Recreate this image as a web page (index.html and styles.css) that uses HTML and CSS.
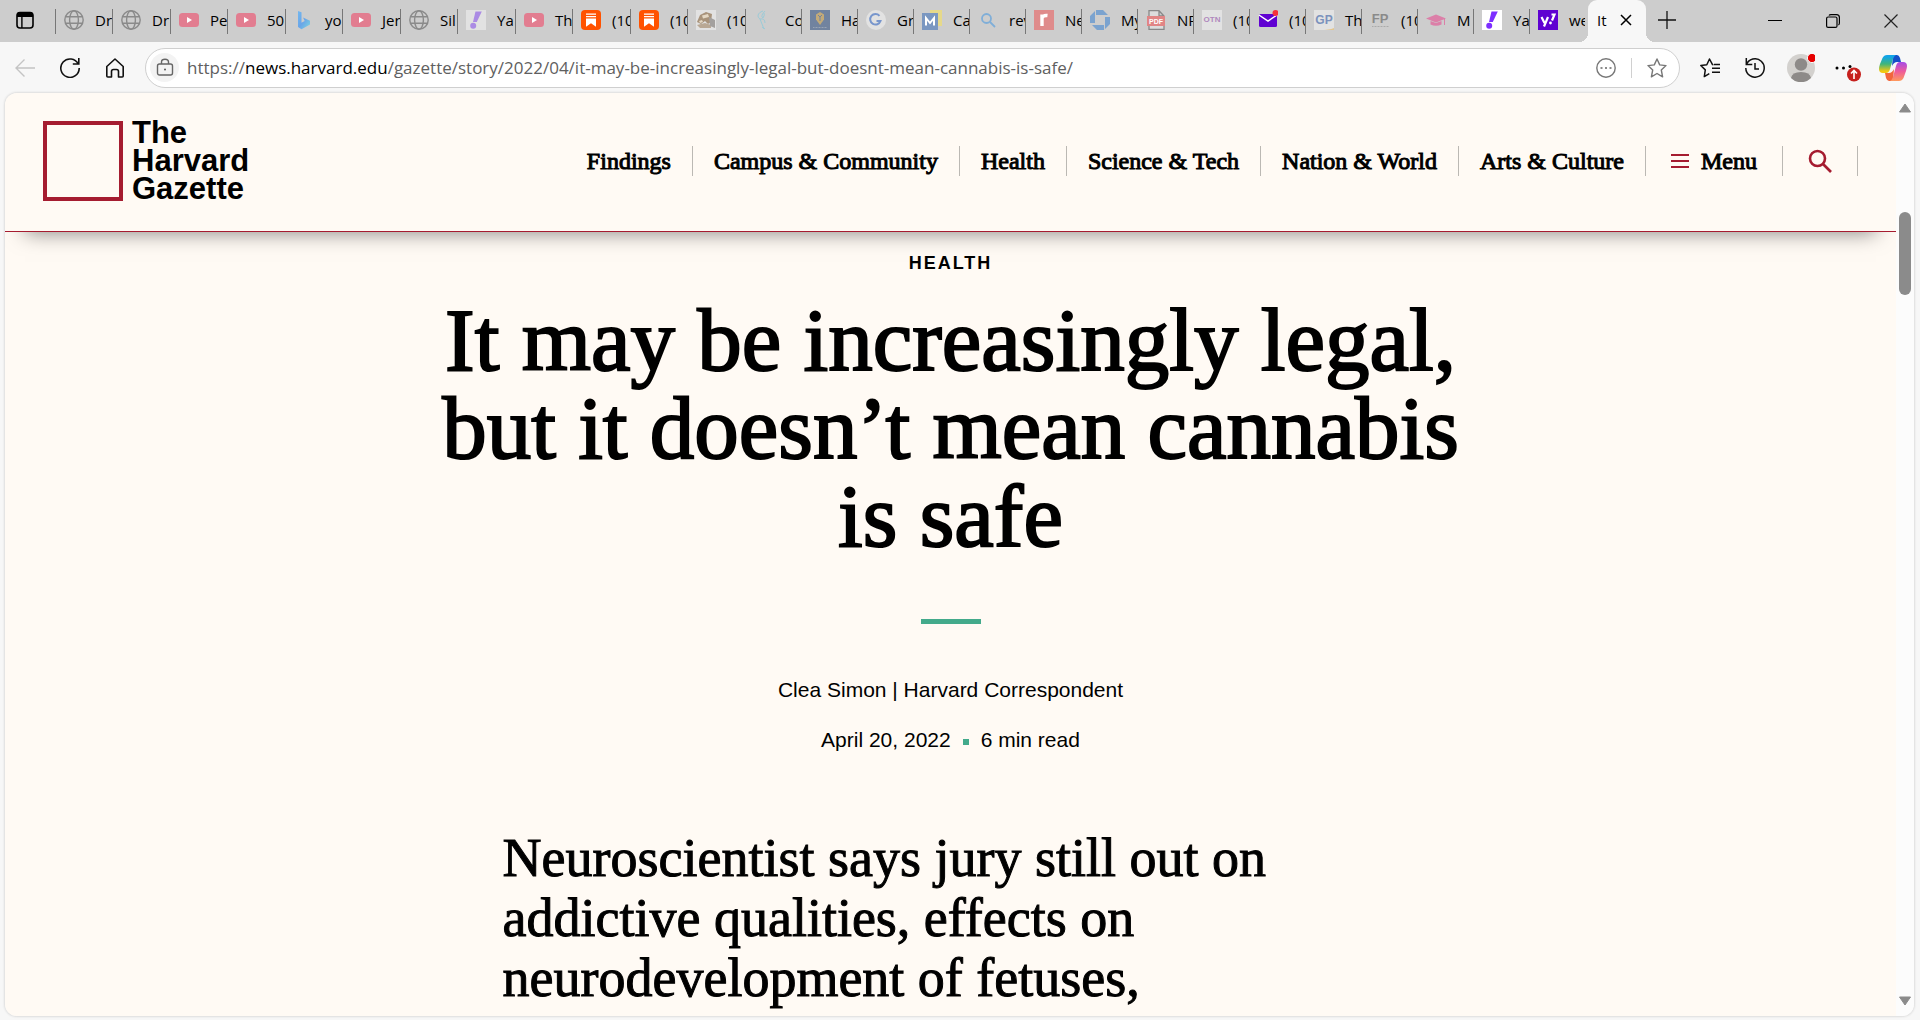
FILE: index.html
```html
<!DOCTYPE html>
<html lang="en">
<head>
    <meta charset="UTF-8">
    <meta name="viewport" content="width=device-width, initial-scale=1.0">
    <title>It may be increasingly legal, but it doesn’t mean cannabis is safe</title>
    <link rel="stylesheet" href="styles.css">
</head>
<body>
    <!-- shared icons -->
    <svg class="sprite" aria-hidden="true">
        <symbol id="globe" viewBox="0 0 20 20">
            <g fill="none" stroke="#8a8a8a" stroke-width="1.4"><circle cx="10" cy="10" r="9.2"/><ellipse cx="10" cy="10" rx="4.4" ry="9.2"/><path d="M1.5 6.8h17M1.5 13.2h17"/></g>
        </symbol>
        <symbol id="youtube" viewBox="0 0 20 20">
            <rect y="3" width="20" height="14" rx="3.5" fill="#e27d90"/><path d="M8 7l5 3-5 3z" fill="#fff"/>
        </symbol>
        <symbol id="substack" viewBox="0 0 20 20">
            <rect width="20" height="20" rx="4" fill="#ff5200"/><path d="M5 4.2h10M5 6.6h10" stroke="#fff" stroke-width="1.2"/><path d="M5 8.5h10v8.2l-5-3.4-5 3.4z" fill="#fff"/>
        </symbol>
        <symbol id="bang" viewBox="0 0 20 20">
            <path d="M9.5 1.5h6.3l-5 10.5H7z"/><circle cx="7.2" cy="15.8" r="3"/>
        </symbol>
    </svg>

    <div class="browser">
        <div class="tabbar">
            <button class="tab-actions" aria-label="Tab actions">
                <svg width="20" height="20" viewBox="0 0 20 20"><rect x="2" y="2.5" width="16" height="15.5" rx="3" fill="none" stroke="#000" stroke-width="1.6"/><path d="M2 7V5a3 3 0 0 1 3-3h10a3 3 0 0 1 3 3v2zM6.2 7h1.4v11H6.2z"/></svg>
            </button>
            <div class="tabs">
                <button class="tab"><svg class="fav"><use href="#globe"/></svg><span>Dr</span></button>
                <button class="tab"><svg class="fav"><use href="#globe"/></svg><span>Dr</span></button>
                <button class="tab"><svg class="fav"><use href="#youtube"/></svg><span>Pe</span></button>
                <button class="tab"><svg class="fav"><use href="#youtube"/></svg><span>50</span></button>
                <button class="tab"><svg class="fav" viewBox="0 0 20 20"><defs><linearGradient id="bing" x1="0" y1="0" x2="1" y2="1"><stop stop-color="#74b8ef"/><stop offset=".5" stop-color="#69a5e8"/><stop offset="1" stop-color="#7fd7df"/></linearGradient></defs><path d="M4 1l3.5 1.3v10.5l3.2-1.7-1.7-3.6 7 3.2v3.8l-8.5 4.8L4 17z" fill="url(#bing)"/></svg><span>yo</span></button>
                <button class="tab"><svg class="fav"><use href="#youtube"/></svg><span>Jer</span></button>
                <button class="tab"><svg class="fav"><use href="#globe"/></svg><span>Sil</span></button>
                <button class="tab"><svg class="fav pale"><use href="#bang" fill="#ab8be4"/></svg><span>Ya</span></button>
                <button class="tab"><svg class="fav"><use href="#youtube"/></svg><span>Th</span></button>
                <button class="tab"><svg class="fav"><use href="#substack"/></svg><span>(10</span></button>
                <button class="tab"><svg class="fav"><use href="#substack"/></svg><span>(10</span></button>
                <button class="tab"><svg class="fav pale" viewBox="0 0 20 20"><path d="M1 12l3-7 6-3 6 2-1 8-3 2-3-3-4 3z" fill="#a8937b"/><path d="M6 5.500l6-1.500 1 3-6 1.500zM3 11l3-1 1 2-3 1z" fill="#e4d8c4"/><path d="M1 15l8-2 6 2v3H4z" fill="#b9a894"/><path d="M13 7l6 3v8l-5-2z" fill="#a3a09e"/></svg><span>(10</span></button>
                <button class="tab"><svg class="fav" viewBox="0 0 20 20" fill="none" stroke="#9bcbd8"><path d="M9 1C3 3 3 7 6 9l4 10M11 1q-5 5-2 7 2-3 1-5M6 9q5-1 5 4M8 17l3 2"/></svg><span>Co</span></button>
                <button class="tab"><svg class="fav" viewBox="0 0 20 20"><path d="M0 0h20v20H0z" fill="#71839f"/><path d="M10 2l4 2.500v5L10 15 6 9.500v-5z" fill="#c3aa78"/><path d="M8 5l2 2 2-2M10 7v4" stroke="#71839f" fill="none"/><path d="M3 17.500h14" stroke="#9aa4b4" stroke-dasharray="1 .5"/></svg><span>Ha</span></button>
                <button class="tab"><svg class="fav" viewBox="0 0 20 20"><circle cx="10" cy="10" r="10" fill="#e2e2e2"/><path d="M13.500 5.800A5.300 5.300 0 1 0 14.500 11h-4" fill="none" stroke="#7896cc" stroke-width="2"/></svg><span>Gr</span></button>
                <button class="tab"><svg class="fav" viewBox="0 0 20 20"><path d="M8 0h12v16H8z" fill="#e6d98a"/><path d="M0 3h16v17H0z" fill="#7a97c1"/><path d="M4 15.500V8l4 5 4-5v7.500" fill="none" stroke="#fff" stroke-width="2"/></svg><span>Ca</span></button>
                <button class="tab"><svg class="fav" viewBox="0 0 20 20" fill="none" stroke="#7faed8" stroke-width="1.800"><circle cx="8.500" cy="8.500" r="4.500"/><path d="M12 12l5 5"/></svg><span>rev</span></button>
                <button class="tab"><svg class="fav" viewBox="0 0 20 20"><path d="M0 0h20v20H0z" fill="#df8b8b"/><path d="M8 16V4.500M8 8q1-3 5.500-2.500" fill="none" stroke="#fff" stroke-width="3.400"/></svg><span>Ne</span></button>
                <button class="tab"><svg class="fav" viewBox="0 0 20 20" fill="#7ba3cf"><path d="M6 0h7l5 5H6zM20 7v7l-5 5V7zM14 20H7l-5-5h12zM0 13V6l5-5v12z"/></svg><span>My</span></button>
                <button class="tab"><svg class="fav" viewBox="0 0 20 20"><path d="M3 .7h10L18 6v13.300H3zM13 1v5h5" fill="#ddd" stroke="#888" stroke-width="1.300"/><rect x="1" y="6" width="18" height="10" fill="#e18585"/><text class="mark-pdf" x="10" y="13.500">PDF</text></svg><span>NP</span></button>
                <button class="tab"><svg class="fav pale" viewBox="0 0 20 20"><text class="mark-otn" x="10" y="12">OTN</text></svg><span>(10</span></button>
                <button class="tab"><svg class="fav" viewBox="0 0 20 20"><rect x="1" y="4" width="18" height="13" rx="1.500" fill="#6001d2"/><path d="M1 5l9 6 9-6" fill="none" stroke="#fff" stroke-width="1.500"/><circle cx="17.500" cy="3" r="3" fill="#f5313b"/></svg><span>(10</span></button>
                <button class="tab"><svg class="fav pale" viewBox="0 0 20 20"><text class="mark-gp" x="10" y="14">GP</text><path d="M6 20q9 0 14-2v2z" fill="#e3c68f"/></svg><span>Th</span></button>
                <button class="tab"><svg class="fav" viewBox="0 0 20 20"><text class="mark-fp" x="10" y="13">FP</text><path d="M2 16.500h17" stroke="#aaa" stroke-dasharray="1 .5"/></svg><span>(10</span></button>
                <button class="tab"><svg class="fav" viewBox="0 0 20 20" fill="#dc7fa8"><path d="M10 4.500l10 4-10 4-10-4z"/><path d="M4.500 11v3.500q5.500 2.500 11 0V11L10 13zM18 9h1v6h-1z"/></svg><span>M</span></button>
                <button class="tab"><svg class="fav white"><use href="#bang" fill="#7d2eff"/></svg><span>Ya</span></button>
                <button class="tab"><svg class="fav" viewBox="0 0 20 20"><path d="M0 0h20v20H0z" fill="#5f01d1"/><path d="M3.500 7l3 6M10 7l-4 9.500M13.500 4.500h3L14 10.500" fill="none" stroke="#fff" stroke-width="2.200"/><circle cx="12.500" cy="13" r="1.400" fill="#fff"/></svg><span>we</span></button>
                <div class="tab-active">
                    <span>It</span>
                    <button aria-label="Close tab"><svg width="12" height="12" viewBox="0 0 12 12"><path d="M1 1l10 10M11 1L1 11" stroke="#000" stroke-width="1.500"/></svg></button>
                </div>
            </div>
            <button class="new-tab" aria-label="New tab"><svg width="18" height="18" viewBox="0 0 18 18"><path d="M9 0v18M0 9h18" stroke="#111" stroke-width="1.300"/></svg></button>
            <div class="window-controls">
                <button aria-label="Minimize"><svg width="14" height="14" viewBox="0 0 14 14"><path d="M0 6.500h14" stroke="#000"/></svg></button>
                <button aria-label="Restore"><svg width="14" height="14" viewBox="0 0 14 14" fill="none" stroke="#000" stroke-width="1.200"><rect x=".6" y="3" width="10.400" height="10.400" rx="1.500"/><path d="M3 1.500Q3.500.6 5 .6h5.500q2.900 0 2.900 2.900V9q0 1.500-1 2"/></svg></button>
                <button aria-label="Close"><svg width="14" height="14" viewBox="0 0 14 14"><path d="M.5.5l13 13M13.500.5l-13 13" stroke="#222" stroke-width="1.200"/></svg></button>
            </div>
        </div>

        <div class="toolbar">
            <div class="nav-buttons">
                <button aria-label="Back"><svg width="20" height="20" viewBox="0 0 20 20" fill="none" stroke="#c4c4c4" stroke-width="1.400"><path d="M20 10H1M9.500 1.500L1 10l8.500 8.500"/></svg></button>
                <button aria-label="Refresh"><svg width="20" height="20" viewBox="0 0 20 20" fill="none" stroke="#111" stroke-width="1.600"><path d="M18.200 6A9.200 9.200 0 1 0 19.200 10M18.800 0v6h-6"/></svg></button>
                <button aria-label="Home"><svg width="20" height="20" viewBox="0 0 20 20" fill="none" stroke="#111" stroke-width="1.600" stroke-linejoin="round"><path d="M10 1l8.200 7.500V18a1 1 0 0 1-1 1h-3.700v-5.500a2 2 0 0 0-2-2h-3a2 2 0 0 0-2 2V19H2.800a1 1 0 0 1-1-1V8.500z"/></svg></button>
            </div>
            <div class="address">
                <button class="site-info" aria-label="View site information"><svg width="18" height="20" viewBox="0 0 18 20" fill="none" stroke="#666" stroke-width="1.400"><rect x="1.500" y="6" width="15" height="11" rx="2"/><path d="M5.500 6V4q0-2.800 3.500-2.800T12.500 4v2"/><circle cx="9" cy="11.500" r="1" fill="#555" stroke="none"/></svg></button>
                <div class="url">https://<b>news.harvard.edu</b>/gazette/story/2022/04/it-may-be-increasingly-legal-but-doesnt-mean-cannabis-is-safe/</div>
                <button class="more-site" aria-label="More"><svg width="20" height="20" viewBox="0 0 20 20"><circle cx="10" cy="10" r="9.200" fill="none" stroke="#777" stroke-width="1.400"/><path d="M4.500 9.200h2v1.600h-2zM9 9.200h2v1.600H9zM13.500 9.200h2v1.600h-2z" fill="#666"/></svg></button>
                <button class="favorite" aria-label="Add to favorites"><svg width="20" height="20" viewBox="0 0 20 20" fill="none" stroke="#777" stroke-width="1.400" stroke-linejoin="round"><path d="M10 1l2.700 5.900 6.300.7-4.700 4.400 1.300 6.800L10 15.500l-5.600 3.300L5.700 12 1 7.600l6.300-.7z"/></svg></button>
            </div>
            <div class="browser-tools">
                <button aria-label="Favorites"><svg width="20" height="20" viewBox="0 0 20 20" fill="none" stroke="#111" stroke-width="1.500" stroke-linejoin="round"><path d="M13.500 6.900l-1-.3L9.500 1 6.800 6.800.8 7.500l4.500 4.400-1 6.700 5-2.900M12 10.200h8M12 14.200h8M14 6.500h6"/></svg></button>
                <button class="history" aria-label="History"><svg width="20" height="20" viewBox="0 0 20 20" fill="none" stroke="#111" stroke-width="1.500"><path d="M1.300 7A9.200 9.200 0 1 1 .8 10M1.300 0v6.500h6M10 5v6h4"/></svg></button>
                <button aria-label="Profile"><svg width="28" height="28" viewBox="0 0 28 28"><circle cx="14" cy="14" r="14" fill="#d3d1ce"/><circle cx="14" cy="10.500" r="6.200" fill="#8d8a88"/><path d="M4 24q1-6 10-6t10 6a14 14 0 0 1-20 0z" fill="#8d8a88"/><circle cx="25" cy="4" r="4.600" fill="#e60000" stroke="#f7f7f7"/></svg></button>
                <button class="settings" aria-label="Settings and more"><svg width="28" height="28" viewBox="0 0 28 28"><circle cx="4" cy="14" r="1.500"/><circle cx="10.500" cy="14" r="1.500"/><circle cx="17" cy="12.500" r="1.500"/><circle cx="21" cy="20.500" r="7" fill="#c6201d"/><path d="M21 25v-8M18 19.500l3-3 3 3" fill="none" stroke="#fff" stroke-width="1.600"/></svg></button>
                <button aria-label="Copilot"><svg width="28" height="28" viewBox="0 0 28 28">
                    <defs>
                        <linearGradient id="cp1" x1="0" y1="0" x2="0" y2="1"><stop offset=".1" stop-color="#12a4e8"/><stop offset=".5" stop-color="#3fb57a"/><stop offset=".9" stop-color="#f2c811"/></linearGradient>
                        <linearGradient id="cp2" x1="0" y1="0" x2="0" y2="1"><stop stop-color="#a44be8"/><stop offset=".5" stop-color="#ee5c9b"/><stop offset="1" stop-color="#ff9a5c"/></linearGradient>
                    </defs>
                    <path d="M14 1h4q2 0 3 3l1 4h-4q-3 0-5 4z" fill="#1450c8"/>
                    <path d="M14 27h-4q-2 0-3-3l-1-5h4q3 0 5-4z" fill="#f2663c"/>
                    <path d="M8 1h9q-2 1-3 4l-3 10q-1 4-4 4H4q-4 0-4-4 0-2 1-5l2.500-6Q5 1 8 1z" fill="url(#cp1)"/>
                    <path d="M20 27h-9q2-1 3-4l3-11q1-4 4-4h3q4 0 4 4 0 2-1 5l-2.500 7Q23 27 20 27z" fill="url(#cp2)"/>
                </svg></button>
            </div>
        </div>

        <div class="viewport">
            <div class="page">
                <header class="site-header">
                    <a class="logo" href="#">
                        <span class="logo-mark"></span>
                        <span class="logo-text">The<br>Harvard<br>Gazette</span>
                    </a>
                    <nav class="site-nav">
                        <a href="#">Findings</a>
                        <a href="#">Campus &amp; Community</a>
                        <a href="#">Health</a>
                        <a href="#">Science &amp; Tech</a>
                        <a href="#">Nation &amp; World</a>
                        <a href="#">Arts &amp; Culture</a>
                        <button class="menu"><svg width="18" height="16" viewBox="0 0 18 16"><path d="M0 2h18M0 8h18M0 14h18" stroke="#a51c30" stroke-width="2"/></svg>Menu</button>
                        <button class="search" aria-label="Search"><svg width="24" height="24" viewBox="0 0 24 24" fill="none" stroke="#a51c30" stroke-width="2.600"><circle cx="9.500" cy="9.500" r="7.500"/><path d="M15 15l8 8"/></svg></button>
                    </nav>
                </header>
                <article class="article">
                    <a class="category" href="#">Health</a>
                    <h1>It may be increasingly legal, but it doesn’t mean cannabis is safe</h1>
                    <hr>
                    <p class="byline">Clea Simon | Harvard Correspondent</p>
                    <p class="dateline"><time datetime="2022-04-20">April 20, 2022</time><span class="dot"></span><span>6 min read</span></p>
                    <h2>Neuroscientist says jury still out on addictive qualities, effects on neurodevelopment of fetuses,</h2>
                </article>
            </div>
            <div class="scrollbar">
                <svg width="14" height="10" viewBox="0 0 14 10"><path d="M7 1l5.500 8h-11z" fill="#8b8b8b" stroke="#8b8b8b" stroke-linejoin="round"/></svg>
                <div class="track"><div class="thumb"></div></div>
                <svg width="14" height="10" viewBox="0 0 14 10"><path d="M7 9L1.500 1h11z" fill="#8b8b8b" stroke="#8b8b8b" stroke-linejoin="round"/></svg>
            </div>
        </div>
    </div>
</body>
</html>
```
FILE: styles.css
```css
:root {
    --crimson: #a51c30;
    --green: #43aa8b;
    --paper: #fffaf4;
    --chrome: #f7f7f7;
    --tabbar: #cdcdcd;
    --ui-font: "Open Sans", "Noto Sans", sans-serif;
    --serif: "Liberation Serif", serif;
    --sans: "Liberation Sans", sans-serif;
}

* {
    margin: 0;
    padding: 0;
    box-sizing: border-box;
}

body {
    background: var(--chrome);
    color: #000;
    overflow: hidden;
}

button {
    border: none;
    background: none;
    font: inherit;
    color: inherit;
    cursor: pointer;
}

a {
    color: inherit;
    text-decoration: none;
}

svg {
    display: block;
    flex: none;
}

.sprite {
    position: absolute;
    width: 0;
    height: 0;
}

.browser {
    display: flex;
    flex-direction: column;
    height: 100vh;
    font-family: var(--ui-font);
}

/* tab strip */

.tabbar {
    display: flex;
    height: 42px;
    background: var(--tabbar);
}

.tab-actions {
    flex: none;
    width: 55px;
    padding: 0 0 2px 15px;
}

.tabs {
    display: flex;
}

.tab {
    display: flex;
    align-items: center;
    gap: 11px;
    width: 56px;
    height: 25px;
    margin-top: 9px;
    padding: 0 0 3px 8px;
    border-left: 1px solid #777;
    font-size: 15px;
    line-height: 20px;
    white-space: nowrap;
    overflow: hidden;
}

.tab:nth-child(-n+12) {
    width: 57px;
}

.tab:nth-child(-n+12):nth-child(even) {
    width: 58px;
}

.fav {
    width: 20px;
    height: 20px;
}

.pale {
    background: #e2e2e2;
}

.white {
    background: #fff;
}

.fav text {
    font-family: var(--sans);
    font-weight: bold;
    text-anchor: middle;
}

.mark-pdf {
    font-size: 7px;
    fill: #fff;
}

.mark-otn {
    font-size: 8px;
    fill: #b088bd;
}

.mark-gp {
    font-size: 12px;
    fill: #7b92bd;
}

.mark-fp {
    font-size: 13px;
    fill: #8a8a8a;
}

.tab-active {
    position: relative;
    display: flex;
    align-items: center;
    justify-content: space-between;
    width: 58px;
    margin-left: 3px;
    padding: 0 14px 2px 9px;
    border-radius: 9px 9px 0 0;
    background: var(--chrome);
    font-size: 15px;
    line-height: 20px;
}

/* the flared feet of the open tab */
.tab-active::before,
.tab-active::after {
    content: "";
    position: absolute;
    bottom: 0;
    width: 9px;
    height: 9px;
}

.tab-active::before {
    right: 100%;
    background: radial-gradient(circle at 0 0, transparent 9px, var(--chrome) 9px);
}

.tab-active::after {
    left: 100%;
    background: radial-gradient(circle at 100% 0, transparent 9px, var(--chrome) 9px);
}

.new-tab {
    padding: 0 12px 2px;
}

.window-controls {
    display: flex;
    margin-left: auto;
}

.window-controls button {
    display: flex;
    justify-content: center;
    align-items: center;
    width: 58px;
}

/* toolbar */

.toolbar {
    display: flex;
    align-items: center;
    height: 51px;
    padding: 0 13px 0 15px;
}

.nav-buttons {
    display: flex;
    gap: 25px;
    margin-right: 20px;
}

.address {
    flex: 1;
    display: flex;
    align-items: center;
    height: 40px;
    margin-right: 20px;
    padding: 0 12px 0 4px;
    border: 1px solid #cfcfcf;
    border-radius: 20px;
    background: #fff;
}

.site-info {
    display: flex;
    justify-content: center;
    align-items: center;
    width: 29px;
    height: 29px;
    border-radius: 50%;
    background: #f3f3f3;
}

.url {
    flex: 1;
    margin-left: 8px;
    font-size: 17px;
    line-height: 24px;
    color: #606060;
    white-space: nowrap;
}

.url b {
    font-weight: normal;
    color: #000;
}

.more-site {
    padding-right: 15px;
}

.favorite {
    padding-left: 15px;
    border-left: 1px solid #d0d0d0;
}

.browser-tools {
    display: flex;
    align-items: center;
}

.browser-tools .history {
    padding: 0 22px 0 25px;
}

.browser-tools .settings {
    padding: 0 18px;
}

/* page area */

.viewport {
    flex: 1;
    display: flex;
    min-height: 0;
    margin: 0 6px 4px 5px;
    border-radius: 12px;
    box-shadow: 0 0 2px 1px #ddd;
    overflow: hidden;
}

.page {
    flex: 1;
    background: var(--paper);
    overflow: hidden;
}

.site-header {
    display: flex;
    justify-content: space-between;
    align-items: center;
    height: 139px;
    padding: 0 38px 2px;
    border-bottom: 1px solid var(--crimson);
    box-shadow: 0 20px 20px -20px rgba(0, 0, 0, 0.5);
}

.logo {
    display: flex;
    align-items: center;
    gap: 9px;
}

.logo-mark {
    width: 80px;
    height: 80px;
    border: 4px solid var(--crimson);
}

.logo-text {
    font: bold 31px/28px var(--sans);
}

.site-nav {
    display: flex;
    align-items: center;
    font: 24px/30px var(--serif);
    -webkit-text-stroke: 1px #000;
}

.site-nav > * {
    height: 30px;
    padding: 0 21px;
    border-right: 1px solid #bbb8b3;
}

.menu {
    display: flex;
    align-items: center;
    gap: 12px;
}

.search {
    display: flex;
    align-items: center;
}

.site-nav .search,
.site-nav .menu {
    padding: 0 25px;
}

.article {
    display: flex;
    flex-direction: column;
    align-items: center;
    padding-top: 21px;
}

.category {
    font: bold 18px/20px var(--sans);
    letter-spacing: 2px;
    text-transform: uppercase;
}

.article h1 {
    max-width: 1060px;
    margin-top: 23px;
    font: 89px/88px var(--serif);
    -webkit-text-stroke: 2px #000;
    text-align: center;
}

.article hr {
    width: 60px;
    height: 5px;
    margin: 59px 0 52px;
    border: none;
    background: var(--green);
}

.byline,
.dateline {
    font: 21px/28px var(--sans);
}

.dateline {
    display: flex;
    align-items: center;
    gap: 12px;
    margin-top: 22px;
}

.dot {
    width: 6px;
    height: 6px;
    margin-top: 4px;
    background: var(--green);
}

.article h2 {
    width: 100%;
    max-width: 896px;
    margin-top: 74px;
    padding-right: 80px;
    font: 54px/60px var(--serif);
    -webkit-text-stroke: 1px #000;
}

/* scrollbar */

.scrollbar {
    display: flex;
    flex-direction: column;
    align-items: center;
    width: 18px;
    padding: 10px 0;
    background: #fcfcfc;
}

.track {
    flex: 1;
    padding-top: 99px;
}

.thumb {
    width: 12px;
    height: 83px;
    border-radius: 6px;
    background: #8b8b8b;
}
```
